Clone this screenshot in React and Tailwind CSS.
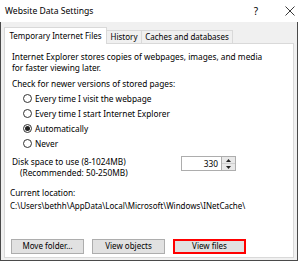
import React from 'react';

const font = { fontFamily: '"Noto Sans", "Open Sans", sans-serif' };

const Radio = ({ checked, label }) => (
  <div className="h-[15px] flex items-center pl-[11px]">
    <span className="w-[9px] h-[9px] rounded-full border border-[#333] bg-white flex items-center justify-center mr-[3px] shrink-0">
      {checked && <span className="w-[5px] h-[5px] rounded-full bg-[#222]" />}
    </span>
    <span>{label}</span>
  </div>
);

const Btn = ({ children, highlight }) => (
  <button
    className={`w-[73px] h-[15px] flex items-center justify-center bg-[#e1e1e1] leading-none text-[8px] ${
      highlight ? 'border-2 border-[#ff0000]' : 'border border-[#adadad]'
    }`}
  >
    {children}
  </button>
);

export default function App() {
  return (
    <div className="w-[300px] h-[263px] bg-white overflow-hidden text-black text-[8.3px]" style={font}>
      {/* title bar */}
      <div className="h-[22px] flex items-center pl-[5px] pr-[5px]">
        <span className="text-[8.6px] pt-[1px]">Website Data Settings</span>
        <span className="ml-auto text-[10px] mr-[27px]">?</span>
        <svg width="10" height="10" viewBox="0 0 10 10" className="mb-[1px]">
          <path d="M0.5 0.5 L9.5 9.5 M9.5 0.5 L0.5 9.5" stroke="#222" strokeWidth="0.9" />
        </svg>
      </div>

      {/* body */}
      <div className="w-[298px] h-[239px] border-l border-r border-b border-[#4a4a4a] bg-[#f0f0f0] flex flex-col px-[3px] pb-[2px]">
        <div className="h-[21px] flex items-end shrink-0 text-[8px]">
          <div className="relative z-10 w-[103px] h-[17px] -mb-px bg-white border border-b-0 border-[#d9d9d9] flex items-center justify-center pb-[1px]">
            Temporary Internet Files
          </div>
          <div className="w-[35px] h-[13px] bg-[#f0f0f0] border-t border-r border-[#d9d9d9] flex items-center justify-center">
            History
          </div>
          <div className="w-[91px] h-[13px] bg-[#f0f0f0] border-t border-r border-[#d9d9d9] flex items-center justify-center">
            Caches and databases
          </div>
        </div>

        <div className="flex-1 bg-white border border-[#d9d9d9] flex flex-col pl-[7px] pt-[7px] leading-[11px]">
          <div className="whitespace-nowrap">Internet Explorer stores copies of webpages, images, and media</div>
          <div>for faster viewing later.</div>
          <div className="mt-[5px]">Check for newer versions of stored pages:</div>

          <div className="mt-[1.5px] flex flex-col">
            <Radio label="Every time I visit the webpage" />
            <Radio label="Every time I start Internet Explorer" />
            <Radio label="Automatically" checked />
            <Radio label="Never" />
          </div>

          <div className="mt-[5px] flex items-start">
            <div className="w-[169px] flex flex-col">
              <div>Disk space to use (8-1024MB)</div>
              <div className="pl-[8px]">(Recommended: 50-250MB)</div>
            </div>
            <div className="flex h-[15px] mt-[0.5px]">
              <div className="w-[41px] h-[15px] border border-[#adadad] flex items-center justify-end pr-[3px]">330</div>
              <div className="w-[14px] h-[15px] border border-l-0 border-[#adadad] flex flex-col">
                <div className="flex-1 bg-[#e8e8e8] border-b border-[#cfcfcf] flex items-center justify-center">
                  <svg width="5" height="3" viewBox="0 0 5 3"><path d="M0 3 L2.5 0 L5 3 Z" fill="#222" /></svg>
                </div>
                <div className="flex-1 bg-[#e8e8e8] flex items-center justify-center">
                  <svg width="5" height="3" viewBox="0 0 5 3"><path d="M0 0 L2.5 3 L5 0 Z" fill="#222" /></svg>
                </div>
              </div>
            </div>
          </div>

          <div className="mt-[9.5px] -ml-[2px]">Current location:</div>
          <div className="mt-[2px] -ml-[2px] text-[8px] whitespace-nowrap">C:\Users\bethh\AppData\Local\Microsoft\Windows\INetCache\</div>

          <div className="mt-[27.5px] -ml-px flex gap-[8px]">
            <Btn>Move folder...</Btn>
            <Btn>View objects</Btn>
            <Btn highlight>View files</Btn>
          </div>
        </div>
      </div>
    </div>
  );
}
